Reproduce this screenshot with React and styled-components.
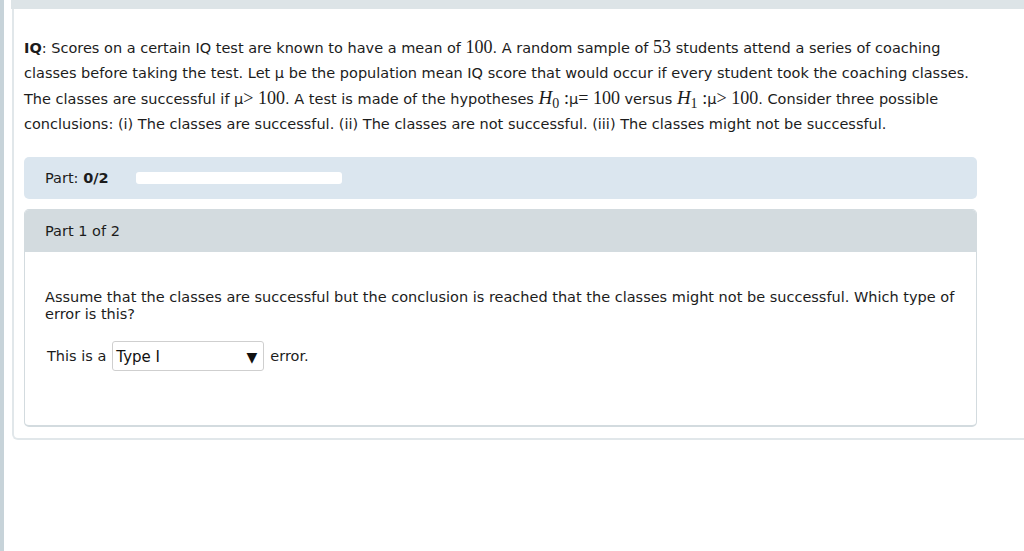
import React from 'react'
import styled, { createGlobalStyle } from 'styled-components'

const GlobalStyle = createGlobalStyle`
  html, body {
    margin: 0;
    padding: 0;
    background: #fff;
  }
  body {
    font-family: "DejaVu Sans", Verdana, sans-serif;
    font-size: 14.5px;
    color: #1c1c1c;
  }
`;

function App() {
  return (
    <>
      <GlobalStyle />
      <Page>
        <Rail />
        <Main>
          <TopBand />
          <Sheet>
            <Intro>
              <b>IQ</b>: Scores on a certain IQ test are known to have a mean of <Num>100</Num>. A random
              sample of <Num>53</Num> students attend a series of coaching<br />
              classes before taking the test. Let μ be the population mean IQ score that would occur if
              every student took the coaching classes.<br />
              The classes are successful if μ<Num>&gt;</Num> <Num>100</Num>. A test is made of the
              hypotheses <Var>H</Var><Sub>0</Sub> <Num>:</Num>μ<Num>=</Num> <Num>100</Num> versus{' '}
              <Var>H</Var><Sub>1</Sub> <Num>:</Num>μ<Num>&gt;</Num> <Num>100</Num>. Consider three possible<br />
              conclusions: (i) The classes are successful. (ii) The classes are not successful. (iii) The
              classes might not be successful.
            </Intro>

            <Progress>
              <span>Part: <b>0/2</b></span>
              <Bar />
            </Progress>

            <PartCard>
              <PartHeader>Part 1 of 2</PartHeader>
              <PartBody>
                <Question>
                  Assume that the classes are successful but the conclusion is reached that the classes
                  might not be successful. Which type of error is this?
                </Question>
                <AnswerRow>
                  <span>This is a</span>
                  <Dropdown>
                    <span>Type I</span>
                    <Caret>▼</Caret>
                  </Dropdown>
                  <span>error.</span>
                </AnswerRow>
              </PartBody>
            </PartCard>
          </Sheet>
        </Main>
      </Page>
    </>
  )
}

const Page = styled.div`
  display: flex;
  min-height: 551px;
`;

const Rail = styled.div`
  width: 4px;
  flex-shrink: 0;
  background: #c7d3d9;
  margin-right: 7px;
`;

const Main = styled.div`
  flex: 1;
  display: flex;
  flex-direction: column;
`;

const TopBand = styled.div`
  height: 9px;
  background: #dde4e7;
`;

const Sheet = styled.div`
  margin-left: 1px;
  margin-right: -20px;
  border-left: 2px solid #e1e7ea;
  border-bottom: 2px solid #e1e7ea;
  border-bottom-left-radius: 6px;
  padding: 27px 0 11px 10px;
`;

const Intro = styled.p`
  margin: 0;
  width: 990px;
  line-height: 25.3px;
  white-space: nowrap;
  b {
    font-weight: bold;
  }
`;

const Num = styled.span`
  font-family: "Liberation Serif", "Times New Roman", serif;
  font-size: 18px;
  line-height: 0;
`;

const Var = styled.span`
  font-family: "Liberation Serif", "Times New Roman", serif;
  font-style: italic;
  font-size: 19px;
  line-height: 0;
`;

const Sub = styled.span`
  font-family: "Liberation Serif", "Times New Roman", serif;
  font-size: 14px;
  line-height: 0;
  position: relative;
  top: 4px;
`;

const Progress = styled.div`
  margin-top: 20px;
  width: 953px;
  height: 42px;
  box-sizing: border-box;
  background: #dbe6ef;
  border-radius: 5px;
  display: flex;
  align-items: center;
  gap: 27px;
  padding: 0 21px;
  b {
    font-weight: bold;
  }
`;

const Bar = styled.div`
  width: 206px;
  height: 12px;
  background: #fff;
  border-radius: 3px;
`;

const PartCard = styled.div`
  margin-top: 10px;
  width: 953px;
  box-sizing: border-box;
  border: 1px solid #d3dbdf;
  border-bottom-width: 2px;
  border-radius: 5px;
  overflow: hidden;
`;

const PartHeader = styled.div`
  height: 42px;
  background: #d3dbdf;
  display: flex;
  align-items: center;
  padding: 0 20px;
`;

const PartBody = styled.div`
  padding: 37px 20px 54px;
`;

const Question = styled.p`
  margin: 0;
  line-height: 17px;
`;

const AnswerRow = styled.div`
  margin-top: 18px;
  margin-left: 2px;
  display: flex;
  align-items: center;
  gap: 6px;
`;

const Dropdown = styled.div`
  width: 152px;
  height: 30px;
  box-sizing: border-box;
  border: 1px solid #cfcfcf;
  border-radius: 3px;
  display: flex;
  align-items: center;
  justify-content: space-between;
  padding: 2px 6px 0 3px;
  font-size: 15px;
  color: #111;
`;

const Caret = styled.span`
  font-size: 14px;
`;

export default App
